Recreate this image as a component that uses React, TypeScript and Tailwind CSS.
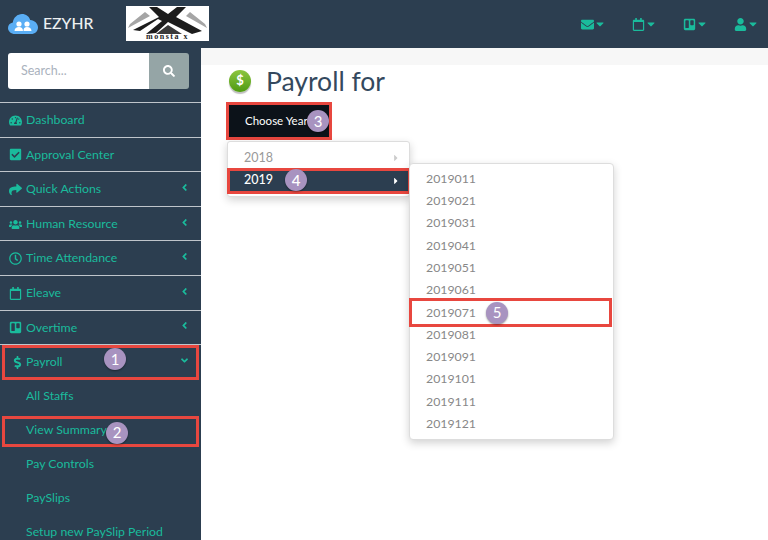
import React from "react";
import {
  FaAngleDown,
  FaAngleLeft,
  FaCaretDown,
  FaCaretRight,
  FaCheckSquare,
  FaDollarSign,
  FaEnvelope,
  FaRegCalendar,
  FaRegClock,
  FaSearch,
  FaShare,
  FaTachometerAlt,
  FaTrello,
  FaUser,
  FaUsers,
} from "react-icons/fa";

const navItems = [
  { label: "Dashboard", icon: <FaTachometerAlt />, arrow: false },
  { label: "Approval Center", icon: <FaCheckSquare />, arrow: false },
  { label: "Quick Actions", icon: <FaShare />, arrow: true },
  { label: "Human Resource", icon: <FaUsers />, arrow: true },
  { label: "Time Attendance", icon: <FaRegClock />, arrow: true },
  { label: "Eleave", icon: <FaRegCalendar />, arrow: true },
  { label: "Overtime", icon: <FaTrello />, arrow: true },
];

const subItems = ["All Staffs", "View Summary", "Pay Controls", "PaySlips", "Setup new PaySlip Period"];

const periods = [
  "2019011", "2019021", "2019031", "2019041", "2019051", "2019061",
  "2019071", "2019081", "2019091", "2019101", "2019111", "2019121",
];

// numbered purple marker from the annotated screenshot
const Badge = ({ n, className }: { n: number; className: string }) => (
  <span
    className={`absolute flex h-[22px] w-[22px] items-center justify-center rounded-full bg-[#a893c0] text-[15px] leading-none text-white shadow-[0_1px_2px_rgba(0,0,0,0.4)] ${className}`}
  >
    {n}
  </span>
);

const TopIcon = ({ icon }: { icon: React.ReactNode }) => (
  <div className="flex w-[23px] items-center text-[#1abb9c]">
    <span className="flex w-[13px] justify-center text-[13px]">{icon}</span>
    <FaCaretDown className="ml-[2px] w-[8px] text-[12px]" />
  </div>
);

const App = () => {
  return (
    <div className="flex h-[540px] w-[768px] flex-col overflow-hidden bg-white font-['Lato','Liberation_Sans',sans-serif]">
      {/* Top bar */}
      <header className="flex h-[48px] shrink-0 items-center bg-[#2c3e50]">
        <div className="flex w-[126px] items-center gap-[5px] pl-[8px]">
          <svg viewBox="0 0 30 20" className="h-[20px] w-[30px]">
            <path
              d="M7 20C3 20 0 17.300 0 14c0-3 2-5 4.800-5.500C5.500 3.500 9.500 0 14 0c4 0 7.200 2.500 8.200 6C26.500 6.300 30 9.500 30 13.500 30 17.300 27 20 23 20Z"
              fill="#5aaef5"
            />
            <circle cx="11" cy="10" r="2.600" fill="#fff" />
            <circle cx="19" cy="10" r="2.600" fill="#fff" />
            <path d="M6.500 17c0-2.800 2-4 4.500-4s4 1.200 4 4Z M15.500 17c0-2.800 1-4 3.500-4s4.500 1.200 4.500 4Z" fill="#fff" />
          </svg>
          <span className="text-[15.7px] font-medium text-[#ecf0f1]">EZYHR</span>
        </div>
        <div className="relative -mt-[1px] h-[35px] w-[83px] bg-white">
          <svg viewBox="0 0 83 35" className="h-full w-full">
            <path d="M2 22 L24 10 L19 6 L4 18Z M81 22 L60 10 L64 6 L79 18Z" fill="#a5a5a5" />
            <path
              d="M7 24 L33 11 L23 1 L31 1 L42 8 L51 1 L60 1 L50 11 L76 25 L66 28 L42 16 L30 27 L20 28 L36 15 L32 13 L14 25Z"
              fill="#1c1c1c"
            />
            <path d="M30 28 L42 19 L56 28Z" fill="#3a3a3a" />
          </svg>
          <span className="absolute bottom-0 left-0 w-full text-center font-['Liberation_Serif',serif] text-[8px] font-bold leading-[8px] tracking-[1.5px] text-[#222]">
            monsta x
          </span>
        </div>
        <div className="ml-auto flex items-center gap-[28px] pr-[11px]">
          <TopIcon icon={<FaEnvelope />} />
          <TopIcon icon={<FaRegCalendar />} />
          <TopIcon icon={<FaTrello />} />
          <TopIcon icon={<FaUser />} />
        </div>
      </header>

      <div className="flex min-h-0 flex-1">
        {/* Sidebar */}
        <aside className="flex w-[201px] shrink-0 flex-col bg-[#2c3e50]">
          <div className="flex h-[54px] shrink-0 px-[8px] pt-[5px]">
            <div className="flex h-[36px] w-[181px] overflow-hidden rounded-[3px]">
              <div className="flex flex-1 items-center bg-white pl-[13px] text-[12.5px] text-[#aab2bd]">Search...</div>
              <div className="flex w-[40px] items-center justify-center bg-[#95a5a6] text-[12px] text-white">
                <FaSearch />
              </div>
            </div>
          </div>

          <nav className="flex flex-col">
            {navItems.map((item) => (
              <div
                key={item.label}
                className="flex h-[34.6px] items-center border-t border-[#bfc5cb] pl-[9px] pr-[11px] pt-[1px] text-[12.3px] text-[#1abb9c]"
              >
                <span className="flex w-[17px] justify-start text-[13px]">{item.icon}</span>
                <span>{item.label}</span>
                {item.arrow && <FaAngleLeft className="mb-[4px] ml-auto text-[11px]" />}
              </div>
            ))}

            <div className="relative flex h-[34.6px] items-center border-t border-[#bfc5cb] pl-[9px] pr-[11px] pt-[1px] text-[12.3px] text-[#1abb9c]">
              <span className="flex w-[17px] justify-center text-[13px]">
                <FaDollarSign />
              </span>
              <span>Payroll</span>
              <FaAngleDown className="mb-[4px] ml-auto text-[11px]" />
              <div className="absolute bottom-[-1px] left-[2px] right-[2px] top-0 border-[3px] border-[#e8473f]" />
              <Badge n={1} className="left-[104px] top-[3px]" />
            </div>

            {subItems.map((label, i) => (
              <div key={label} className="relative flex h-[33.8px] items-center pl-[26px] pt-[2px] text-[12.3px] text-[#1abb9c]">
                <span>{label}</span>
                {i === 1 && (
                  <>
                    <div className="absolute bottom-[-1px] left-[2px] right-[2px] top-[3px] border-[3px] border-[#e8473f]" />
                    <Badge n={2} className="left-[106px] top-[9px]" />
                  </>
                )}
              </div>
            ))}
          </nav>
        </aside>

        {/* Main area */}
        <main className="relative flex-1 bg-white">
          <div className="h-[17px] bg-[#f7f7f7]" />
          <div className="flex items-center pl-[28px] pt-[1px]">
            <span className="flex h-[22px] w-[22px] items-center justify-center rounded-full bg-gradient-to-b from-[#8cc63f] to-[#4e9a0e] text-[13px] font-bold text-white shadow-[0_2px_1px_rgba(0,0,0,0.25)]">
              $
            </span>
            <h1 className="pl-[15px] text-[26.5px] font-normal leading-[30px] text-[#34495e]">Payroll for</h1>
          </div>

          <div className="ml-[25px] mt-[6px] flex h-[38px] w-[106px] items-center border-[3px] border-[#e8473f] bg-[#0c1219] pl-[16px] text-[11.5px] text-white">
            Choose Year
          </div>
          <Badge n={3} className="left-[106px] top-[62px]" />

          {/* Year dropdown */}
          <div className="absolute left-[26px] top-[93px] w-[183px] rounded-[3px] border border-[#dddddd] bg-white py-[3px] shadow-[0_3px_8px_rgba(0,0,0,0.18)]">
            <div className="flex h-[24px] items-center justify-between pl-[16px] pr-[8px] pt-[2px] text-[12.5px] text-[#999999]">
              <span>2018</span>
              <FaCaretRight className="text-[10px] text-[#cccccc]" />
            </div>
            <div className="relative flex h-[24px] items-center justify-between bg-[#2c3e50] pb-[1px] pl-[16px] pr-[8px] text-[12.5px] font-medium text-white">
              <span>2019</span>
              <FaCaretRight className="text-[10px]" />
              <div className="absolute -inset-y-[1px] -left-[1px] -right-[2px] border-[3px] border-[#e8473f]" />
              <Badge n={4} className="left-[57px] top-0" />
            </div>
          </div>

          {/* Period submenu */}
          <div className="absolute left-[208px] top-[115px] w-[205px] rounded-[4px] border border-[#dddddd] bg-white py-[4px] shadow-[0_3px_8px_rgba(0,0,0,0.18)]">
            {periods.map((p) => (
              <div key={p} className="relative flex h-[22.27px] items-center pl-[16px] text-[12.3px] text-[#888888]">
                <span>{p}</span>
                {p === "2019071" && (
                  <>
                    <div className="absolute -bottom-[3px] -left-[1px] -top-[4px] right-[1px] border-[3px] border-[#e8473f]" />
                    <Badge n={5} className="left-[76px] top-0" />
                  </>
                )}
              </div>
            ))}
          </div>
        </main>
      </div>
    </div>
  );
};

export default App;
